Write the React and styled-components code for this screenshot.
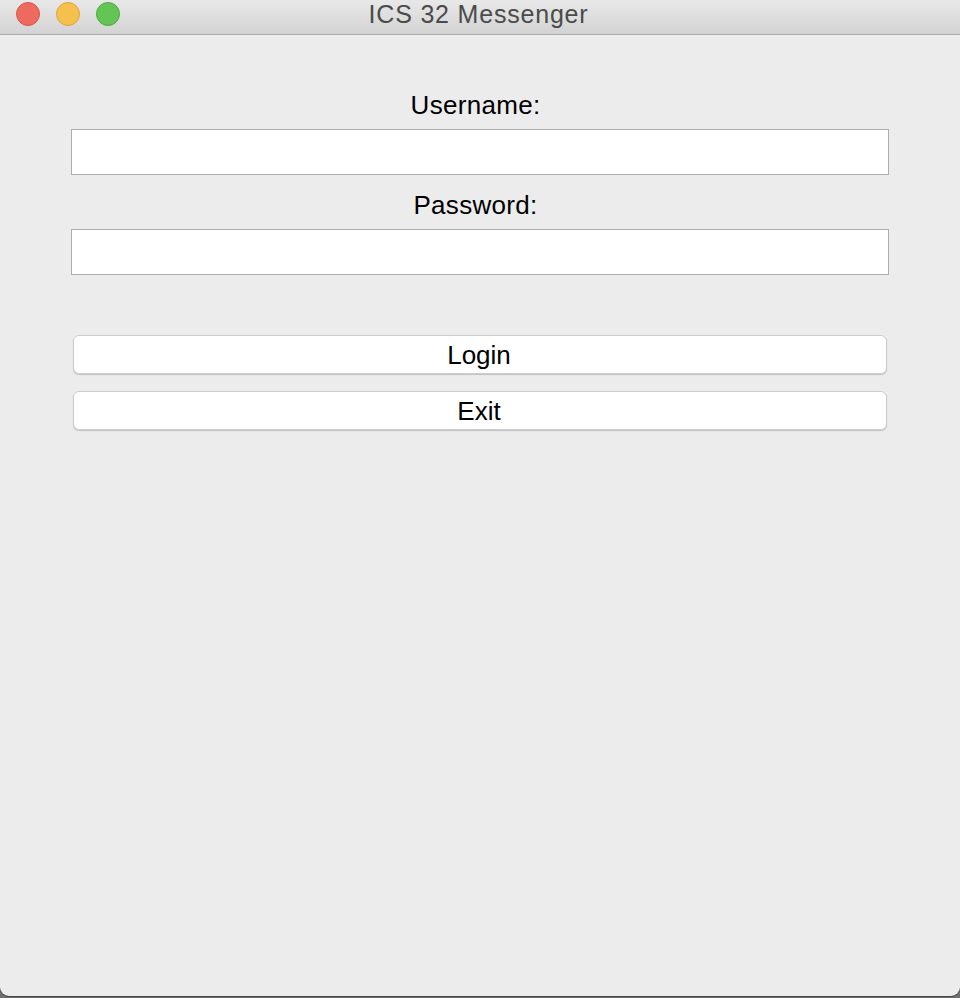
import React from "react";
import styled, { createGlobalStyle } from "styled-components";

const Global = createGlobalStyle`
  html, body { margin: 0; padding: 0; }
  body { background: #6e6e6e; font-family: "Liberation Sans", Arial, sans-serif; }
`;

const Desktop = styled.div`
  width: 960px;
  height: 998px;
  background: #707070;
  overflow: hidden;
`;

const Window = styled.div`
  width: 960px;
  height: 996px;
  background: #ececec;
  border-radius: 0 0 9px 9px;
  display: flex;
  flex-direction: column;
  overflow: hidden;
  box-shadow: 0 1px 1px rgba(0, 0, 0, 0.4);
`;

const TitleBar = styled.div`
  height: 34px;
  flex: 0 0 34px;
  background: linear-gradient(#e8e8e8, #d3d3d3);
  border-bottom: 1px solid #a9a9a9;
  display: grid;
  grid-template-columns: 1fr auto 1fr;
  align-items: center;
`;

const Lights = styled.div`
  display: flex;
  gap: 16px;
  padding-left: 16px;
  align-items: center;
  margin-top: -6px;
`;

const Light = styled.span`
  width: 22px;
  height: 22px;
  border-radius: 50%;
  background: ${(p) => p.$fill};
  border: 1px solid ${(p) => p.$edge};
`;

const Title = styled.div`
  font-size: 25px;
  letter-spacing: 0.8px;
  color: #4b4b4b;
  margin-top: -5px;
  padding-right: 3px;
`;

const Content = styled.div`
  display: flex;
  flex-direction: column;
  padding: 55px 71px 0 71px;
`;

const Label = styled.div`
  font-size: 26px;
  letter-spacing: 0.3px;
  line-height: 30px;
  color: #000;
  text-align: center;
  padding-right: 9px;
  margin-bottom: 9px;
`;

const Field = styled.input`
  box-sizing: border-box;
  height: 46px;
  width: 100%;
  background: #fff;
  border: 1px solid #adadad;
  margin: 0 0 15px 0;
  padding: 0 6px;
  font: inherit;
  font-size: 22px;
  outline: none;
`;

const Buttons = styled.div`
  display: flex;
  flex-direction: column;
  gap: 17px;
  padding: 45px 2px 0 2px;
`;

const Button = styled.button`
  box-sizing: border-box;
  height: 39px;
  width: 100%;
  background: #fff;
  border: 1px solid #cdcdcd;
  border-radius: 6px;
  box-shadow: 0 1px 1px rgba(0, 0, 0, 0.18);
  font-family: "Liberation Sans", Arial, sans-serif;
  font-size: 26px;
  color: #000;
  padding: 1px 2px 0 0;
  line-height: 36px;
  cursor: default;
`;

export default function App() {
  return (
    <>
      <Global />
      <Desktop>
        <Window>
          <TitleBar>
            <Lights>
              <Light $fill="#ee6a5f" $edge="#d6574c" />
              <Light $fill="#f6c04f" $edge="#dca53c" />
              <Light $fill="#62c554" $edge="#4ea842" />
            </Lights>
            <Title>ICS 32 Messenger</Title>
            <div />
          </TitleBar>
          <Content>
            <Label>Username:</Label>
            <Field type="text" />
            <Label>Password:</Label>
            <Field type="password" />
            <Buttons>
              <Button>Login</Button>
              <Button>Exit</Button>
            </Buttons>
          </Content>
        </Window>
      </Desktop>
    </>
  );
}
